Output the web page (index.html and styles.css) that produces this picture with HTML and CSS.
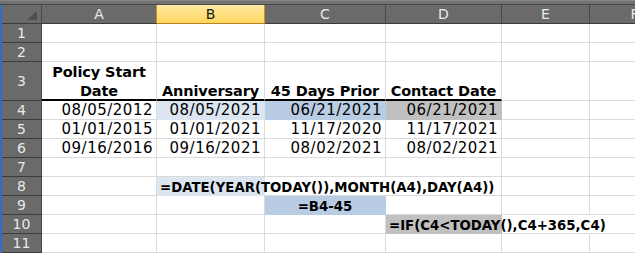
FILE: index.html
```html
<!DOCTYPE html>
<html lang="en">
<head>
<meta charset="utf-8">
<title>Policy anniversary dates</title>
<link rel="stylesheet" href="styles.css">
</head>
<body>
<div class="window">
  <div class="frame-top"></div>
  <div class="frame-body">
    <div class="frame-edge"></div>
    <div class="sheet">
      <!-- column headers -->
      <div class="hd corner">
        <svg class="corner-tri" width="10" height="9" viewBox="0 0 10 9"><polygon points="0,9 10,9 10,0" fill="#4d4d4d"/></svg>
      </div>
      <div class="hd col col-before-sel">A</div>
      <div class="hd col col-sel">B</div>
      <div class="hd col">C</div>
      <div class="hd col">D</div>
      <div class="hd col">E</div>
      <div class="hd col">F</div>

      <!-- row 1 -->
      <div class="hd row">1</div>
      <div class="c"></div><div class="c"></div><div class="c"></div><div class="c"></div><div class="c"></div><div class="c"></div>

      <!-- row 2 -->
      <div class="hd row">2</div>
      <div class="c"></div><div class="c"></div><div class="c"></div><div class="c"></div><div class="c"></div><div class="c"></div>

      <!-- row 3: column titles -->
      <div class="hd row">3</div>
      <div class="c title"><span class="title-text">Policy Start<br>Date</span></div>
      <div class="c title"><span class="title-text">Anniversary</span></div>
      <div class="c title"><span class="title-text">45 Days Prior</span></div>
      <div class="c title"><span class="title-text">Contact Date</span></div>
      <div class="c"></div><div class="c"></div>

      <!-- row 4 -->
      <div class="hd row">4</div>
      <div class="c num">08/05/2012</div>
      <div class="c num fill-blue-light">08/05/2021</div>
      <div class="c num fill-blue">06/21/2021</div>
      <div class="c num fill-gray">06/21/2021</div>
      <div class="c"></div><div class="c"></div>

      <!-- row 5 -->
      <div class="hd row">5</div>
      <div class="c num">01/01/2015</div>
      <div class="c num">01/01/2021</div>
      <div class="c num">11/17/2020</div>
      <div class="c num">11/17/2021</div>
      <div class="c"></div><div class="c"></div>

      <!-- row 6 -->
      <div class="hd row">6</div>
      <div class="c num">09/16/2016</div>
      <div class="c num">09/16/2021</div>
      <div class="c num">08/02/2021</div>
      <div class="c num">08/02/2021</div>
      <div class="c"></div><div class="c"></div>

      <!-- row 7 -->
      <div class="hd row">7</div>
      <div class="c"></div><div class="c"></div><div class="c"></div><div class="c"></div><div class="c"></div><div class="c"></div>

      <!-- row 8: anniversary formula -->
      <div class="hd row">8</div>
      <div class="c"></div>
      <div class="c formula fill-blue-light">=DATE(YEAR(TODAY()),MONTH(A4),DAY(A4))</div>
      <div class="c spill"></div>
      <div class="c"></div>
      <div class="c"></div><div class="c"></div>

      <!-- row 9: 45 days prior formula -->
      <div class="hd row">9</div>
      <div class="c"></div>
      <div class="c"></div>
      <div class="c formula centered fill-blue">=B4-45</div>
      <div class="c"></div>
      <div class="c"></div><div class="c"></div>

      <!-- row 10: contact date formula -->
      <div class="hd row">10</div>
      <div class="c"></div>
      <div class="c"></div>
      <div class="c"></div>
      <div class="c formula fill-gray">=IF(C4&lt;TODAY(),C4+365,C4)</div>
      <div class="c spill"></div><div class="c"></div>

      <!-- row 11 -->
      <div class="hd row">11</div>
      <div class="c"></div><div class="c"></div><div class="c"></div><div class="c"></div><div class="c"></div><div class="c"></div>
    </div>
  </div>
</div>
</body>
</html>
```

FILE: styles.css
```css
html, body {
  margin: 0;
  padding: 0;
  background: #ffffff;
}

.window {
  width: 635px;
  height: 253px;
  display: flex;
  flex-direction: column;
  overflow: hidden;
}

/* strip above the column headers */
.frame-top {
  box-sizing: border-box;
  height: 5px;
  flex: none;
  background: #727272;
  border-top: 1px solid #868686;
  border-bottom: 1px solid #474747;
}

.frame-body {
  flex: 1;
  display: flex;
  min-height: 0;
}

/* window accent line on the left */
.frame-edge {
  width: 2px;
  flex: none;
  background: #3a6bc4;
}

.sheet {
  flex: 1;
  min-width: 0;
  overflow: hidden;
  display: grid;
  grid-template-columns: 40px 115px 108px 121px 116px 88px 90px;
  grid-template-rows: 19px 19px 19px 39px repeat(8, 19px);
  background: #ffffff;
}

/* headers */
.hd {
  box-sizing: border-box;
  background: #6a6a6a;
  border-right: 1px solid #474747;
  border-bottom: 1px solid #3c3c3c;
  color: #e9e9e9;
  font-family: "DejaVu Sans", Verdana, sans-serif;
  font-size: 14px;
  line-height: 16px;
  display: flex;
  align-items: center;
  justify-content: center;
}

.corner {
  justify-content: flex-end;
  align-items: flex-end;
  padding: 0 4px 3px 0;
}

.corner-tri {
  display: block;
}

.col-before-sel {
  border-right-color: #c38a2e;
}

.col-sel {
  background: linear-gradient(#ffe9a3, #ffd65e);
  color: #1b1b1b;
  border-right-color: #c8922f;
  border-bottom-color: #b98124;
}

/* data cells */
.c {
  box-sizing: border-box;
  min-width: 0;
  border-right: 1px solid #dadada;
  border-bottom: 1px solid #dadada;
  display: flex;
  align-items: flex-end;
  color: #000000;
  font-family: "DejaVu Sans", Verdana, sans-serif;
  font-size: 15px;
  line-height: 17px;
  white-space: nowrap;
}

.num {
  justify-content: flex-end;
  padding-right: 3px;
  letter-spacing: 0.5px;
}

.title {
  justify-content: center;
  text-align: center;
  font-weight: bold;
  font-size: 14.5px;
  letter-spacing: -0.1px;
  border-bottom: 2px solid #000000;
}

.title-text {
  line-height: 19px;
  margin-bottom: -2px;
}

.formula {
  font-weight: bold;
  font-size: 13.3px;
  line-height: 15px;
  padding-left: 3px;
}

.formula.centered {
  justify-content: center;
  padding-left: 0;
}

/* text from the cell on the left runs through these, so no gridline */
.spill,
.formula {
  border-right-color: transparent;
}

/* fills */
.fill-blue-light {
  background: #dce6f1;
  border-color: transparent;
}

.fill-blue {
  background: #b8cce4;
  border-color: transparent;
}

.fill-gray {
  background: #c0c0c0;
  border-color: transparent;
}
```
